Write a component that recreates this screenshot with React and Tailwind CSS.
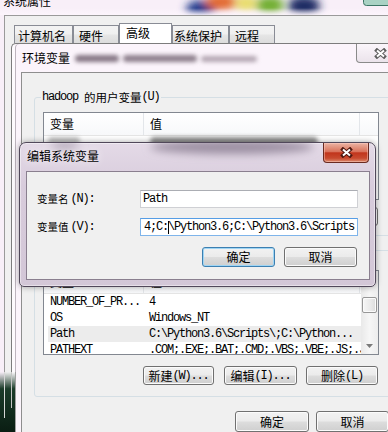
import React from 'react';

const mono = "font-['Liberation_Mono',monospace] text-[12px] tracking-[-1.2px]";

const tabs = [
  { label: '计算机名', w: 'w-[59px]', pl: 'pl-[3px]' },
  { label: '硬件', w: 'w-[46px]', pl: 'pl-[5px]' },
  { label: '高级', w: 'w-[53px]', pl: 'pl-[6px]', active: true },
  { label: '系统保护', w: 'w-[57px]', pl: 'pl-[1px]' },
  { label: '远程', w: 'w-[46px]', pl: 'pl-[5px]' },
];

const sysVars = [
  ['NUMBER_OF_PR...', '4'],
  ['OS', 'Windows_NT'],
  ['Path', 'C:\\Python3.6\\Scripts\\;C:\\Python...'],
  ['PATHEXT', '.COM;.EXE;.BAT;.CMD;.VBS;.VBE;.JS;.JSE'],
];

function CloseGlyph({ outline }) {
  const d = 'M3 2.5 L10 8.5 M10 2.5 L3 8.5';
  return (
    <svg width="13" height="11" viewBox="0 0 13 11">
      <path d={d} stroke={outline} strokeWidth="4" strokeLinecap="square" fill="none" />
      <path d={d} stroke="#ffffff" strokeWidth="2" strokeLinecap="butt" fill="none" />
    </svg>
  );
}

function WinButton({ children, focused = false, className = '' }) {
  const edge = focused
    ? 'border-[#3c7fb1] shadow-[inset_0_0_0_1px_#9fd5f4]'
    : 'border-[#707070] shadow-[inset_0_0_0_1px_#fbfbfb]';
  return (
    <div
      className={`flex items-center justify-center rounded-[3px] border bg-[linear-gradient(#f2f2f2_0%,#ebebeb_48%,#dddddd_52%,#cfcfcf_100%)] leading-[14px] ${edge} ${className}`}
    >
      {children}
    </div>
  );
}

function Caption({ zh, en }) {
  return (
    <span className="flex items-center">
      <span>{zh}</span>
      {en && <span className={mono}>{en}</span>}
    </span>
  );
}

function ListHeader({ filler = false }) {
  return (
    <div className="h-[23px] shrink-0 flex border-b border-[#e5e5e5] bg-[linear-gradient(#ffffff,#f7f8fa)]">
      <div className="w-[100px] flex items-center pl-[6px] border-r border-[#e3e6ea]">变量</div>
      <div className="w-[216px] flex items-center pl-[6px] border-r border-[#e3e6ea]">值</div>
      {filler && <div className="flex-1" />}
    </div>
  );
}

function Scrollbar() {
  return (
    <div className="w-[17px] flex flex-col bg-[linear-gradient(90deg,#e9e9e9,#f6f6f6_50%,#ededed)]">
      <div className="h-[17px] flex items-center justify-center">
        <svg width="7" height="4" viewBox="0 0 7 4">
          <path d="M0 4 H7 L3.5 0 Z" fill="#7a7a7a" />
        </svg>
      </div>
      <div className="flex-1">
        <div className="mt-[9px] mx-px h-[16px] rounded-[2px] border border-[#979797] bg-[linear-gradient(90deg,#f6f6f6,#e9e9e9_60%,#dcdcdc)] shadow-[inset_0_0_0_1px_#fbfbfb]" />
      </div>
      <div className="h-[17px] flex items-center justify-center">
        <svg width="7" height="4" viewBox="0 0 7 4">
          <path d="M0 0 H7 L3.5 4 Z" fill="#7a7a7a" />
        </svg>
      </div>
    </div>
  );
}

function ButtonRow({ className = '' }) {
  return (
    <div className={`flex ${className}`}>
      <WinButton className="w-[71px] h-[19px]"><Caption zh="新建" en="(W)..." /></WinButton>
      <WinButton className="ml-[10px] w-[73px] h-[19px]"><Caption zh="编辑" en="(I)..." /></WinButton>
      <WinButton className="ml-[9px] w-[72px] h-[19px]"><Caption zh="删除" en="(L)" /></WinButton>
    </div>
  );
}

function EnvDialog() {
  return (
    <div className="absolute left-[11px] top-[43px] w-[392px] h-[400px] flex flex-col rounded-tl-[5px] border-l border-t border-[#7c7c7c] bg-[#fbf4fb] shadow-[inset_3px_0_0_#fdfafd,inset_4px_0_0_#bdb4bd]">
      <div className="h-[28px] flex items-start">
        <span className="ml-[10px] mt-[7px] leading-[14px]">环境变量</span>
        <div className="flex items-center gap-[4px] ml-[5px] mt-[10px] h-[9px]">
          <div className="w-[44px] h-[7px] rounded-full bg-[#857684] blur-[2px]" />
          <div className="w-[74px] h-[7px] rounded-full bg-[#8d7f8c] blur-[2px]" />
          <div className="w-[56px] h-[6px] rounded-full bg-[#b3a6b2] blur-[2px]" />
        </div>
        <div className="ml-auto mr-[3px] w-[44px] h-[19px] flex items-center pl-[17px] rounded-b-[4px] border border-t-0 border-[#8a8a8a] bg-[linear-gradient(#fbf6fb,#ebe3eb)]">
          <CloseGlyph outline="#5e5e5e" />
        </div>
      </div>

      <div className="flex-1 ml-[9px] flex flex-col border-l border-t border-[#8e8e8e] bg-[#f0f0f0]">
        {/* user variables */}
        <div className="mt-[24px] ml-[12px] mr-[10px] rounded-[3px] border border-[#d5dfe5] pb-[9px]">
          <div className="-mt-[8px] ml-[6px] w-fit px-[1px] bg-[#f0f0f0] h-[14px] flex items-center text-[11.5px]">
            <span className={mono}>hadoop</span>
            <span className="ml-[6px]">的用户变量</span>
            <span className={mono}>(U)</span>
          </div>
          <div className="mt-[8px] ml-[8px] w-[336px] h-[88px] flex flex-col border border-[#828790] bg-white overflow-hidden">
            <ListHeader filler />
            <div className="h-[16px] mt-[1px] flex items-start">
              <div className="ml-[4px] w-[32px] h-[8px] rounded-full bg-[#bdbdbd] blur-[2px]" />
              <div className="ml-[70px] w-[168px] h-[9px] rounded-full bg-[#8d8d8d] blur-[2px]" />
            </div>
          </div>
          <ButtonRow className="mt-[7px] ml-[108px]" />
        </div>

        {/* system variables */}
        <div className="mt-[14px] ml-[12px] mr-[10px] rounded-[3px] border border-[#d5dfe5] pb-[11px]">
          <div className="-mt-[8px] ml-[6px] w-fit px-[1px] bg-[#f0f0f0] h-[14px] flex items-center text-[11.5px]">
            <span>系统变量</span>
            <span className={mono}>(S)</span>
          </div>
          <div className="mt-[13px] ml-[8px] w-[336px] h-[85px] flex border border-[#828790] bg-white overflow-hidden">
            <div className="flex-1 min-w-0 flex flex-col">
              <ListHeader />
              {sysVars.map(([name, value]) => (
                <div
                  key={name}
                  className={`h-[16px] shrink-0 ml-[4px] flex items-center overflow-hidden ${name === 'Path' ? 'bg-[#ececec]' : ''}`}
                >
                  <span className={`w-[95px] shrink-0 pl-[2px] ${mono}`}>{name}</span>
                  <span className={`pl-[6px] whitespace-nowrap ${mono}`}>{value}</span>
                </div>
              ))}
            </div>
            <Scrollbar />
          </div>
          <ButtonRow className="mt-[11px] ml-[108px]" />
        </div>

        <div className="mt-[14px] ml-[213px] flex gap-[7px]">
          <WinButton className="w-[74px] h-[21px]">确定</WinButton>
          <WinButton className="w-[73px] h-[21px]">取消</WinButton>
        </div>
      </div>
    </div>
  );
}

function EditDialog() {
  return (
    <div className="absolute left-[19px] top-[142px] w-[357px] h-[145px] flex flex-col rounded-t-[7px] rounded-b-[5px] border border-[#51485a] bg-[linear-gradient(#e4dae7,#d8ccdc_30%,#d3c7d7)] shadow-[0_0_6px_rgba(0,0,0,0.35),inset_0_0_0_1px_rgba(255,255,255,0.45)]">
      <div className="relative h-[28px] flex items-start">
        <svg className="absolute left-0 top-0" width="300" height="28" viewBox="0 0 300 28">
          <defs>
            <filter id="tb" x="-30%" y="-100%" width="160%" height="300%">
              <feGaussianBlur stdDeviation="4" />
            </filter>
          </defs>
          <g filter="url(#tb)">
            <ellipse cx="212" cy="4" rx="82" ry="7" fill="#9b8fa2" />
            <ellipse cx="45" cy="3" rx="14" ry="4" fill="#b3a8b8" />
          </g>
        </svg>
        <span className="relative ml-[7px] mt-[6px] leading-[14px] [text-shadow:0_0_8px_rgba(255,255,255,0.95)]">编辑系统变量</span>
        <div className="relative ml-auto mr-[6px] w-[46px] h-[20px] flex items-center justify-center rounded-b-[4px] border border-t-0 border-[#6a2a20] bg-[linear-gradient(#ebb4a4,#d9735c_45%,#c1351c_52%,#c84a2f_80%,#dd8c6e)] shadow-[inset_0_0_0_1px_rgba(255,210,200,0.45)]">
          <CloseGlyph outline="#4f1810" />
        </div>
      </div>

      <div className="ml-[6px] mr-[5px] h-[109px] flex flex-col border border-[#8a7f8f] bg-[#f0f0f0]">
        <div className="mt-[18px] flex items-center">
          <div className="w-[113px] pl-[10px] flex items-center text-[10.5px]">
            <span>变量名</span>
            <span className={`ml-[2px] ${mono}`}>(N):</span>
          </div>
          <div className="w-[218px] h-[18px] flex items-center pl-[2px] border border-[#cfd0d4] border-t-[#abadb3] bg-white">
            <span className={mono}>Path</span>
          </div>
        </div>
        <div className="mt-[10px] flex items-center">
          <div className="w-[113px] pl-[10px] flex items-center text-[10.5px]">
            <span>变量值</span>
            <span className={`ml-[2px] ${mono}`}>(V):</span>
          </div>
          <div className="relative w-[218px] h-[18px] flex items-center pl-[3px] border border-[#7eb4ea] border-t-[#569de5] bg-white overflow-hidden whitespace-nowrap">
            <span className={mono}>{'4;C:\\Python3.6;C:\\Python3.6\\Scripts'}</span>
            <div className="absolute left-[27px] top-[2px] w-px h-[13px] bg-black" />
          </div>
        </div>
        <div className="mt-[11px] ml-[175px] flex gap-[9px]">
          <WinButton focused className="w-[73px] h-[20px]">确定</WinButton>
          <WinButton className="w-[73px] h-[20px]">取消</WinButton>
        </div>
      </div>
    </div>
  );
}

export default function App() {
  return (
    <div className="relative w-[388px] h-[432px] overflow-hidden bg-[#f8eff8] font-['Noto_Sans_CJK_SC',sans-serif] text-[12px] leading-[14px] text-black">
      <div className="flex flex-col h-full">
        {/* system properties title strip */}
        <div className="relative h-[15px] shrink-0">
          <svg className="absolute left-0 top-0" width="388" height="15" viewBox="0 0 388 15">
            <defs>
              <filter id="logo" x="-50%" y="-100%" width="200%" height="300%">
                <feGaussianBlur stdDeviation="4" />
              </filter>
              <linearGradient id="fade" x1="0" y1="0" x2="0" y2="1">
                <stop offset="0" stopColor="#fdf6fd" stopOpacity="0" />
                <stop offset="1" stopColor="#fdf6fd" stopOpacity="0.85" />
              </linearGradient>
            </defs>
            <g filter="url(#logo)">
              <ellipse cx="201" cy="9" rx="15" ry="9" fill="#233a8c" />
              <ellipse cx="221" cy="2" rx="16" ry="8" fill="#e2662c" />
              <ellipse cx="246" cy="3" rx="11" ry="8" fill="#e8dc66" />
              <ellipse cx="270" cy="5" rx="14" ry="9" fill="#6fae2e" />
              <ellipse cx="304" cy="6" rx="16" ry="10" fill="#1d2c63" />
            </g>
            <rect x="0" y="8" width="388" height="7" fill="url(#fade)" />
            <rect x="363.5" y="-9" width="30" height="14.5" rx="3" fill="#a9d2c4" stroke="#3c7565" />
          </svg>
          <span className="relative block ml-[3px] -mt-[6px] leading-[14px]">系统属性</span>
        </div>

        {/* system properties client */}
        <div className="flex-1 ml-[4px] border-l border-t border-[#9a9a9a] bg-[#f0f0f0]">
          <div className="h-[27px] pt-[7px] pl-[9px] flex items-end">
            {tabs.map((t) => (
              <div
                key={t.label}
                className={`${t.w} ${t.pl} border border-b-0 border-[#898c95] leading-[14px] ${
                  t.active
                    ? 'h-[20px] pt-[2px] bg-white'
                    : 'h-[18px] pt-[3px] bg-[linear-gradient(#f3f3f3,#f0f0f0_45%,#e5e5e5_55%,#dcdcdc)]'
                }`}
              >
                {t.label}
              </div>
            ))}
          </div>
        </div>
      </div>

      <EnvDialog />
      <EditDialog />

      {/* desktop showing through at the lower left */}
      <div className="absolute left-0 bottom-0 w-[16px] h-[60px] flex bg-[linear-gradient(rgba(12,38,24,0)_0%,#1b3b29_28%,#0a1d13_100%)]">
        <div className="w-[4px]" />
        <div className="w-px h-[46px] bg-[#d6d6d6]" />
        <div className="w-[6px]" />
        <div className="w-px h-[36px] bg-[#c4c4c4]" />
        <div className="w-[3px]" />
        <div className="w-px bg-[#a0a0a0]" />
      </div>
    </div>
  );
}
